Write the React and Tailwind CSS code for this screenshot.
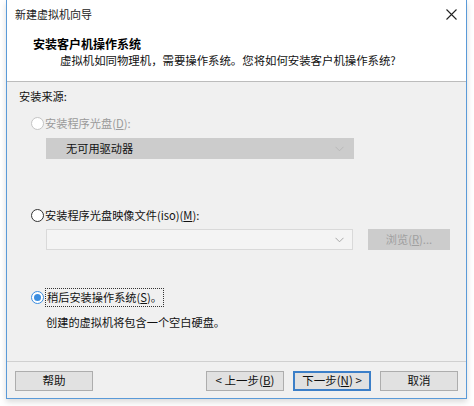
const font = { fontFamily: '"Noto Sans CJK SC", "Liberation Sans", sans-serif' };

function Radio({ checked, disabled }) {
  return (
    <span
      className={`w-[13px] h-[13px] rounded-full border flex items-center justify-center bg-white shrink-0 ${
        disabled ? "border-[#c4c4c4]" : checked ? "border-[#3c8ee0]" : "border-[#333333]"
      }`}
    >
      {checked && <span className="w-[7px] h-[7px] rounded-full bg-[#3c8ee0]" />}
    </span>
  );
}

function Chevron({ color = "#a8a8a8" }) {
  return (
    <svg width="9" height="6" viewBox="0 0 9 6" fill="none">
      <path d="M0.5 0.8 L4.5 4.8 L8.5 0.8" stroke={color} strokeWidth="1" />
    </svg>
  );
}

function Button({ children, primary }) {
  return (
    <div
      className={`w-[78px] h-[20px] flex items-center justify-center text-[11.5px] text-[#111] bg-[#e1e1e1] border ${
        primary ? "border-[#3c7fc8] border-[2px]" : "border-[#adadad]"
      }`}
    >
      {children}
    </div>
  );
}

export default function App() {
  return (
    <div className="w-[474px] h-[406px] bg-white pl-[6px] overflow-hidden" style={font}>
      <div className="w-[461px] h-[399px] border-x border-b border-[#5a9ad8] flex flex-col shadow-[0_3px_6px_rgba(0,0,0,0.15)]">
        {/* title + header */}
        <div className="bg-white h-[81px] flex flex-col">
          <div className="h-[28px] flex items-center justify-between pl-[8px] pr-[9px]">
            <span className="text-[11px] text-[#222] leading-none">新建虚拟机向导</span>
            <svg width="11" height="11" viewBox="0 0 11 11">
              <path d="M0.5 0.5 L10.5 10.5 M10.5 0.5 L0.5 10.5" stroke="#222" strokeWidth="1.1" />
            </svg>
          </div>
          <div className="pl-[26px] pt-[8px] text-[12px] font-bold text-black leading-[16px]">安装客户机操作系统</div>
          <div className="pl-[53px] text-[11.4px] text-[#111] leading-[17px]">
            虚拟机如同物理机，需要操作系统。您将如何安装客户机操作系统?
          </div>
        </div>
        <div className="h-px bg-[#bcbcbc]" />

        {/* body */}
        <div className="flex-1 bg-[#f0f0f0] flex flex-col pl-[12px] text-[11.2px] leading-none">
          <div className="pt-[9px] text-[#111]">安装来源:</div>

          <div className="pt-[15px] pl-[12px] flex items-center gap-[1px] text-[#9a9a9a]">
            <Radio disabled />
            <span>
              安装程序光盘(<span className="underline">D</span>):
            </span>
          </div>
          <div className="mt-[8px] ml-[27px] w-[308px] h-[21px] bg-[#cccccc] flex items-center justify-between pl-[20px] pr-[10px] text-[#111]">
            <span>无可用驱动器</span>
            <Chevron color="#b8b8b8" />
          </div>

          <div className="pt-[50px] pl-[12px] flex items-center gap-[1px] text-[#111]">
            <Radio />
            <span>
              安装程序光盘映像文件(iso)(<span className="underline">M</span>):
            </span>
          </div>
          <div className="mt-[7px] ml-[27px] flex items-center gap-[15px]">
            <div className="w-[307px] h-[21px] bg-[#f4f4f4] border border-[#d9d9d9] flex items-center justify-end pr-[8px]">
              <Chevron />
            </div>
            <div className="w-[82px] h-[21px] bg-[#cccccc] flex items-center justify-center text-[#a0a0a0]">
              浏览(<span className="underline">R</span>)...
            </div>
          </div>

          <div className="pt-[38px] pl-[12px] flex items-center gap-[1px] text-[#111]">
            <Radio checked />
            <span className="border border-dotted border-[#333] px-[1px] py-[3px]">
              稍后安装操作系统(<span className="underline">S</span>)。
            </span>
          </div>
          <div className="pt-[10px] pl-[27px] text-[#111]">创建的虚拟机将包含一个空白硬盘。</div>
        </div>

        <div className="h-px bg-[#d0d0d0]" />
        {/* footer */}
        <div className="h-[36px] bg-[#f0f0f0] flex items-center pl-[8px] pr-[8px] pt-[2px]">
          <Button>帮助</Button>
          <div className="flex-1" />
          <div className="flex gap-[9px]">
            <Button>
              &lt; 上一步(<span className="underline">B</span>)
            </Button>
            <Button primary>
              下一步(<span className="underline">N</span>) &gt;
            </Button>
            <Button>取消</Button>
          </div>
        </div>
      </div>
    </div>
  );
}
